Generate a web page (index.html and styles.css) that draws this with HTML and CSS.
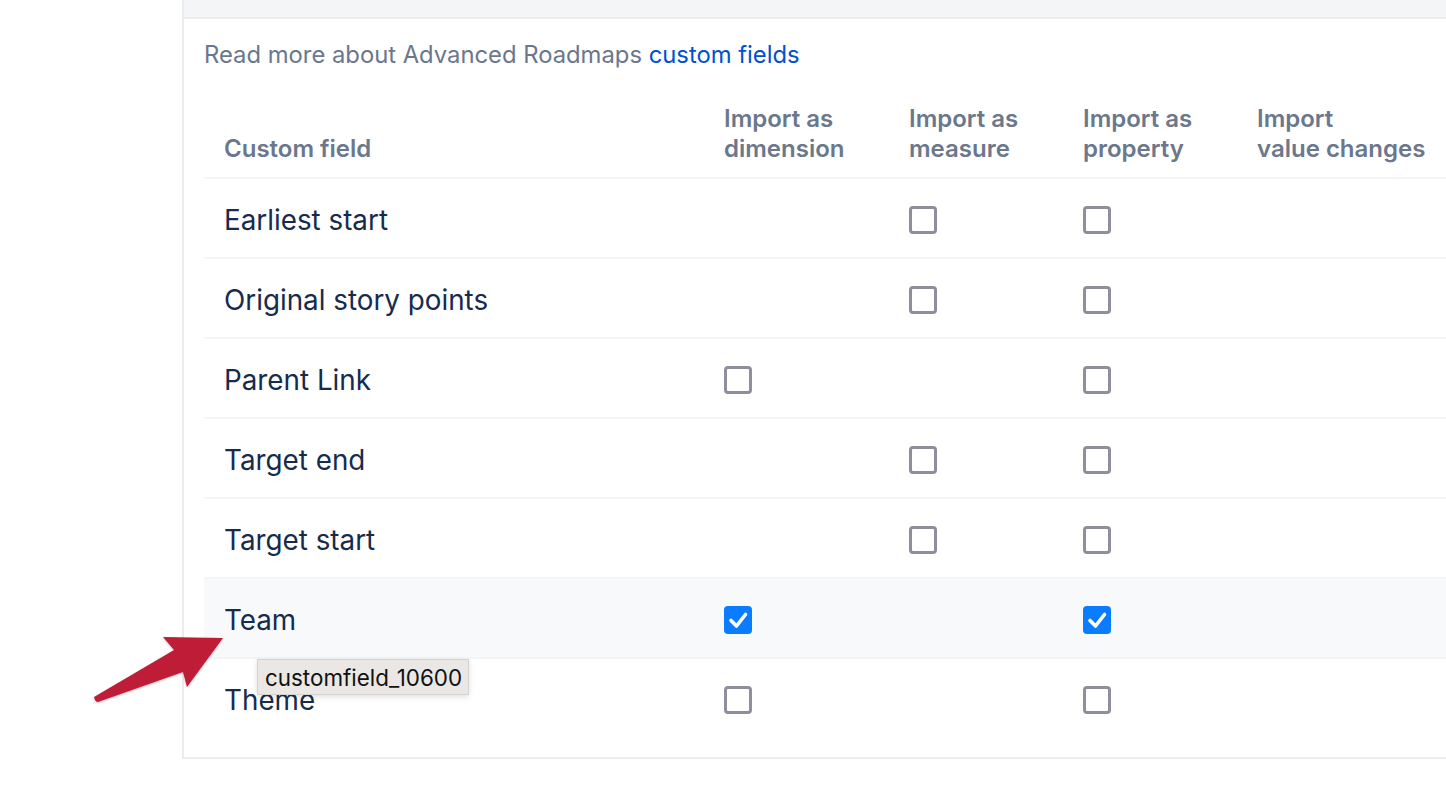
FILE: index.html
```html
<!DOCTYPE html>
<html>
<head>
<meta charset="utf-8">
<link rel="stylesheet" href="styles.css">
</head>
<body>
<div class="page">
  <div class="gutter"></div>
  <div class="panel">
    <div class="band"></div>
    <div class="content">
      <p class="intro">Read more about Advanced Roadmaps <a href="#" class="link">custom fields</a></p>
      <table class="fields">
        <thead>
          <tr>
            <th class="c1">Custom field</th>
            <th class="c2">Import as<br>dimension</th>
            <th class="c3">Import as<br>measure</th>
            <th class="c4">Import as<br>property</th>
            <th class="c5">Import<br>value changes</th>
          </tr>
        </thead>
        <tbody>
          <tr><td>Earliest start</td><td></td><td><span class="cb"></span></td><td><span class="cb"></span></td><td></td></tr>
          <tr><td>Original story points</td><td></td><td><span class="cb"></span></td><td><span class="cb"></span></td><td></td></tr>
          <tr><td>Parent Link</td><td><span class="cb"></span></td><td></td><td><span class="cb"></span></td><td></td></tr>
          <tr><td>Target end</td><td></td><td><span class="cb"></span></td><td><span class="cb"></span></td><td></td></tr>
          <tr><td>Target start</td><td></td><td><span class="cb"></span></td><td><span class="cb"></span></td><td></td></tr>
          <tr class="hover"><td>Team</td><td><span class="cb on"><svg viewBox="0 0 28 28" width="28" height="28"><path d="M7 14.5l5.5 5.5 9-11.5" fill="none" stroke="#fff" stroke-width="3.6" stroke-linecap="round" stroke-linejoin="round"/></svg></span></td><td></td><td><span class="cb on"><svg viewBox="0 0 28 28" width="28" height="28"><path d="M7 14.5l5.5 5.5 9-11.5" fill="none" stroke="#fff" stroke-width="3.6" stroke-linecap="round" stroke-linejoin="round"/></svg></span></td><td></td></tr>
          <tr class="last"><td>Theme</td><td><span class="cb"></span></td><td></td><td><span class="cb"></span></td><td></td></tr>
        </tbody>
      </table>
    </div>
  </div>
</div>
<div class="tooltip">customfield_10600</div>
<svg class="arrow" width="150" height="80" viewBox="0 0 150 80">
  <defs>
    <filter id="sh" x="-10%" y="-10%" width="130%" height="130%">
      <feDropShadow dx="0" dy="1" stdDeviation="1" flood-color="#000" flood-opacity="0.25"/>
    </filter>
  </defs>
  <path d="M133 13 L73 12 L84 25 L4 72 Q5 77 8 77 L93 47 L97 62 Z" fill="#bf1b37" filter="url(#sh)"/>
</svg>
</body>
</html>
```

FILE: styles.css
```css
html, body {
  margin: 0;
  padding: 0;
  background: #fff;
  overflow: hidden;
  width: 1446px;
  height: 788px;
}
body {
  font-family: Inter, "Noto Sans", sans-serif;
  position: relative;
}
.page {
  display: flex;
  width: 1600px;
}
.gutter {
  width: 182px;
  flex: none;
}
.panel {
  width: 1400px;
  border-left: 2px solid #ebecf0;
  border-bottom: 2px solid #ebecf0;
}
.band {
  height: 17px;
  background: #f4f5f7;
  border-bottom: 2px solid #ebecf0;
}
.content {
  padding: 20px 0 20px 20px;
}
.intro {
  margin: 0;
  height: 32px;
  line-height: 32px;
  font-size: 23.8px;
  color: #6b778c;
}
.link {
  color: #0052cc;
  text-decoration: none;
}
.fields {
  margin-top: 33px;
  border-collapse: collapse;
  table-layout: fixed;
  width: 1242px;
}
.fields th {
  text-align: left;
  vertical-align: bottom;
  font-weight: 600;
  font-size: 24px;
  line-height: 30px;
  color: #6b778c;
  padding: 0 0 13px 20px;
  border-bottom: 2px solid #f4f5f7;
}
.c1 { width: 480px; }
.c2 { width: 165px; }
.c3 { width: 154px; }
.c4 { width: 154px; }
.fields td {
  height: 75px;
  padding: 3px 0 0 20px;
  font-size: 27.8px;
  color: #172b4d;
  border-bottom: 2px solid #f4f5f7;
  vertical-align: middle;
}
.fields tr.last td {
  border-bottom: none;
}
.fields tr.hover td {
  background: #f8f9fb;
}
.cb {
  display: block;
  width: 28px;
  height: 28px;
  box-sizing: border-box;
  border: 3px solid #8e8e9e;
  border-radius: 4px;
  background: #fff;
  margin-top: 0;
}
.cb.on {
  border: none;
  background: #0a7cff;
}
.cb svg {
  display: block;
}
.tooltip {
  position: absolute;
  left: 257px;
  top: 659px;
  height: 36px;
  box-sizing: border-box;
  padding: 0 6px 0 7px;
  line-height: 35px;
  font-family: Inter, "Noto Sans", sans-serif;
  font-size: 22.4px;
  color: #111;
  background: #ebe7e4;
  border: 1px solid #d6d2cf;
  box-shadow: 0 2px 6px rgba(0,0,0,0.12);
}
.arrow {
  position: absolute;
  left: 90px;
  top: 625px;
}
```
